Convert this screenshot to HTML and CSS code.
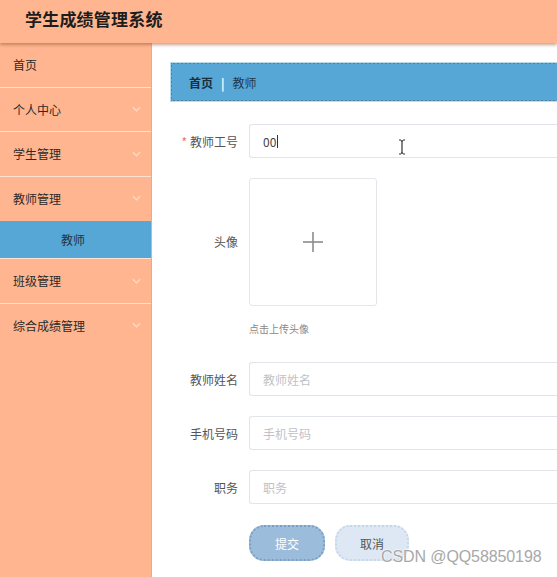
FILE: index.html
```html
<!DOCTYPE html>
<html lang="zh">
<head>
<meta charset="utf-8">
<title>学生成绩管理系统</title>
<link rel="stylesheet" href="styles.css">
</head>
<body>
<header class="topbar">
  <h1 class="title">学生成绩管理系统</h1>
</header>
<div class="layout">
  <aside class="sidebar">
    <div class="menu-item">首页</div>
    <div class="menu-item has-sub">个人中心<svg class="chev" viewBox="0 0 10 6"><polyline points="1,1 5,5 9,1"/></svg></div>
    <div class="menu-item has-sub">学生管理<svg class="chev" viewBox="0 0 10 6"><polyline points="1,1 5,5 9,1"/></svg></div>
    <div class="menu-item has-sub open">教师管理<svg class="chev" viewBox="0 0 10 6"><polyline points="1,1 5,5 9,1"/></svg></div>
    <div class="menu-sub active">教师</div>
    <div class="menu-item has-sub">班级管理<svg class="chev" viewBox="0 0 10 6"><polyline points="1,1 5,5 9,1"/></svg></div>
    <div class="menu-item has-sub last">综合成绩管理<svg class="chev" viewBox="0 0 10 6"><polyline points="1,1 5,5 9,1"/></svg></div>
  </aside>
  <main class="main">
    <div class="breadcrumb">
      <span class="crumb-home">首页</span>
      <span class="crumb-sep">|</span>
      <span class="crumb-cur">教师</span>
    </div>
    <form class="form">
      <div class="row">
        <label class="label"><span class="req">*</span>教师工号</label>
        <div class="input filled">00<span class="caret"></span></div>
      </div>
      <div class="row row-upload">
        <label class="label label-upload">头像</label>
        <div class="upload-wrap">
          <div class="upload">
            <svg class="plus" viewBox="0 0 22 22"><line x1="11" y1="1" x2="11" y2="21"/><line x1="1" y1="11" x2="21" y2="11"/></svg>
          </div>
          <div class="hint">点击上传头像</div>
        </div>
      </div>
      <div class="row">
        <label class="label">教师姓名</label>
        <div class="input placeholder">教师姓名</div>
      </div>
      <div class="row">
        <label class="label">手机号码</label>
        <div class="input placeholder">手机号码</div>
      </div>
      <div class="row">
        <label class="label">职务</label>
        <div class="input placeholder">职务</div>
      </div>
      <div class="row buttons">
        <button type="button" class="btn btn-submit">提交</button>
        <button type="button" class="btn btn-cancel">取消</button>
      </div>
    </form>
  </main>
</div>
<svg class="ibeam" viewBox="0 0 8 16"><path d="M1,1 H3 M5,1 H7 M3,1.5 Q4,2 4,3 V13 Q4,14 3,14.5 M5,1.5 Q4,2 4,3 M5,14.5 Q4,14 4,13 M1,15 H3 M5,15 H7"/></svg>
<div class="watermark">CSDN @QQ58850198</div>
</body>
</html>
```
FILE: styles.css
```css
* { box-sizing: border-box; }
html, body {
  margin: 0;
  padding: 0;
  width: 557px;
  height: 577px;
  overflow: hidden;
  background: #fff;
  font-family: "Noto Sans CJK SC", "Noto Sans", sans-serif;
  font-size: 12px;
  color: #333;
}
.topbar {
  position: relative;
  z-index: 2;
  height: 43px;
  background: #ffb690;
  box-shadow: 0 2px 3px rgba(150, 90, 60, 0.55);
  display: flex;
  align-items: center;
  padding-left: 25px;
}
.title {
  margin: 0;
  font-size: 17px;
  font-weight: 700;
  color: #1d1d1d;
  letter-spacing: 0.2px;
  position: relative;
  top: -3px;
}
.layout {
  display: flex;
  height: 534px;
}
.sidebar {
  width: 152px;
  flex: none;
  background: #ffb690;
  border-right: 1px solid #f3a882;
}
.menu-item {
  height: 44.5px;
  display: flex;
  align-items: center;
  justify-content: space-between;
  padding: 0 10px 0 13px;
  border-bottom: 1px solid #ffe2d2;
  color: #2a2a2a;
  font-size: 12px;
}
.menu-item.open,
.menu-item.last {
  border-bottom-color: transparent;
}
.chev {
  width: 9px;
  height: 6px;
  fill: none;
  stroke: #ffd9c4;
  stroke-width: 1.4;
}
.menu-sub {
  height: 38px;
  display: flex;
  align-items: center;
  padding-left: 61px;
  background: #56a6d6;
  color: #1f3446;
  border-bottom: 1px solid #ffe2d2;
}
.main {
  flex: 1;
  min-width: 0;
  padding: 19px 0 0 18px;
  overflow: hidden;
}
.breadcrumb {
  width: 420px;
  height: 40px;
  background: #56a6d6;
  border: 2px dotted #5c7f99;
  border-right: none;
  outline: 1px solid #b9dcef;
  outline-offset: -1px;
  display: flex;
  align-items: center;
  padding-left: 17px;
  font-size: 12px;
}
.crumb-home { color: #1c2d3b; font-weight: 700; }
.crumb-sep { color: #ffffff; margin: 0 8px; font-weight: 700; }
.crumb-cur { color: #24384a; }
.form {
  margin-top: 22px;
  display: flex;
  flex-direction: column;
}
.row {
  display: flex;
  align-items: center;
  margin-bottom: 20px;
}
.label {
  width: 79px;
  flex: none;
  padding-right: 11px;
  text-align: right;
  color: #555;
  font-size: 12px;
}
.req { color: #f56c6c; margin-right: 3px; }
.input {
  width: 400px;
  height: 34px;
  border: 1px solid #e2e4e9;
  border-right: none;
  border-radius: 3px 0 0 3px;
  display: flex;
  align-items: center;
  padding-left: 13px;
  font-size: 12px;
}
.input.filled { color: #444; }
.input.placeholder { color: #bfc2c8; }
.caret {
  display: inline-block;
  width: 1px;
  height: 13px;
  background: #333;
  margin-left: 1px;
}
.row-upload {
  align-items: flex-start;
  margin-bottom: 26px;
}
.label-upload {
  line-height: 18px;
  margin-top: 55px;
}
.upload-wrap { display: flex; flex-direction: column; }
.upload {
  width: 128px;
  height: 128px;
  border: 1px solid #e4e6ea;
  border-radius: 3px;
  display: flex;
  align-items: center;
  justify-content: center;
}
.plus {
  width: 22px;
  height: 22px;
  stroke: #8c8c8c;
  stroke-width: 1.6;
}
.hint {
  margin-top: 16px;
  font-size: 10px;
  color: #888;
  line-height: 14px;
}
.buttons {
  padding-left: 79px;
  gap: 10px;
  margin-top: 1px;
}
.btn {
  height: 36px;
  border-radius: 15px;
  font-family: "Noto Sans CJK SC", sans-serif;
  font-size: 12px;
  padding: 0;
  cursor: pointer;
}
.btn-submit {
  width: 76px;
  background: #9cbcdb;
  color: #fff;
  border: 2px dotted #7a9fc2;
}
.btn-cancel {
  width: 74px;
  background: #dde8f4;
  color: #555;
  border: 2px dotted #c6d6e8;
}
.ibeam {
  position: absolute;
  left: 398px;
  top: 139px;
  width: 8px;
  height: 16px;
  fill: none;
  stroke: #333;
  stroke-width: 1.2;
}
.watermark {
  position: absolute;
  left: 381px;
  top: 548px;
  font-family: "Liberation Sans", Arial, sans-serif;
  font-size: 16px;
  letter-spacing: -0.1px;
  color: #a8a8a8;
  text-shadow: 0 0 2px #fff, 0 0 2px #fff;
}
```
